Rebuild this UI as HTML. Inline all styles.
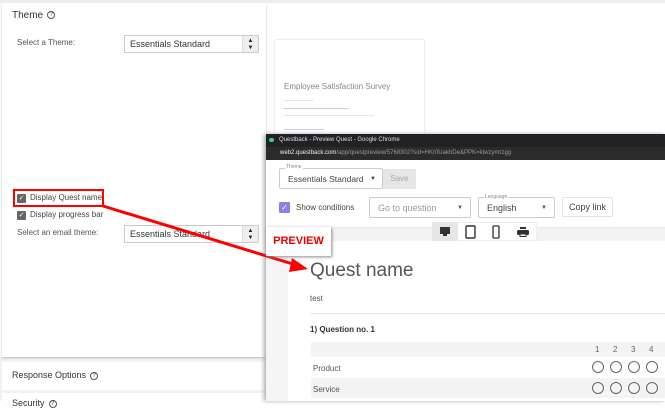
<!DOCTYPE html>
<html><head><style>
*{box-sizing:border-box;margin:0;padding:0}
body{width:665px;height:401px;overflow:hidden;position:relative;background:#fff;font-family:"Liberation Sans",sans-serif;color:#333}
.abs{position:absolute}
.sel{position:absolute;background:#fff;border:1px solid #ccc;font-size:9px;padding-left:5px;line-height:16px;color:#333}
.sel .ar{position:absolute;right:0;top:0;width:16px;height:100%;background:#eee;border-left:1px solid #ddd;font-size:6px;line-height:7px;text-align:center;padding-top:2px;color:#222}
.cb{position:absolute;width:9px;height:9px;background:#666;border-radius:1px;color:#fff;font-size:7px;line-height:9px;text-align:center}
.q{display:inline-block;width:8px;height:8px;border:1px solid #555;border-radius:50%;font-size:6px;line-height:6px;text-align:center;vertical-align:middle;margin-left:4px}
.circ{position:absolute;width:12px;height:12px;border:1px solid #666;border-radius:50%}
.box{position:absolute;background:#fff;border:1px solid #ccc;border-radius:2px;font-size:9px;color:#444}
</style></head><body>
<div class="abs" style="left:0;top:0;width:665px;height:3px;background:#eee"></div>
<div class="abs" style="left:0;top:357px;width:266px;height:44px;background:#f2f2f2"></div>
<div class="abs" style="left:2px;top:3px;width:264px;height:354px;background:#fff;box-shadow:0 1px 2px #bbb"></div>
<div class="abs" style="left:12px;top:10px;font-size:10px;color:#333">Theme<span class="q">?</span></div>
<div class="abs" style="left:17px;top:38px;font-size:8px;color:#555">Select a Theme:</div>
<div class="sel" style="left:124px;top:35px;width:135px;height:18px">Essentials Standard<div class="ar">▲<br>▼</div></div>
<div class="abs" style="left:275px;top:40px;width:149px;height:100px;background:#fff;box-shadow:0 0 2px #ccc"></div>
<div class="abs" style="left:284px;top:82px;font-size:8px;color:#888">Employee Satisfaction Survey</div>
<div class="abs" style="left:284px;top:100px;width:30px;height:1px;background:#e4e4e4"></div>
<div class="abs" style="left:284px;top:108px;width:65px;height:1px;background:#ccc"></div>
<div class="abs" style="left:284px;top:115px;width:90px;height:1px;background:#e4e4e4"></div>
<div class="abs" style="left:284px;top:129px;width:40px;height:1px;background:#ccc"></div>
<div class="cb" style="left:17px;top:194px">✓</div>
<div class="abs" style="left:30px;top:193px;font-size:8px;color:#444">Display Quest name</div>
<div class="cb" style="left:17px;top:211px">✓</div>
<div class="abs" style="left:30px;top:210px;font-size:8px;color:#444">Display progress bar</div>
<div class="abs" style="left:17px;top:228px;font-size:8px;color:#555">Select an email theme:</div>
<div class="sel" style="left:124px;top:225px;width:135px;height:18px">Essentials Standard<div class="ar">▲<br>▼</div></div>
<div class="abs" style="left:2px;top:362px;width:264px;height:28px;background:#fff"></div>
<div class="abs" style="left:12px;top:370px;font-size:9px">Response Options<span class="q">?</span></div>
<div class="abs" style="left:2px;top:393px;width:264px;height:10px;background:#fff"></div>
<div class="abs" style="left:12px;top:398px;font-size:9px">Security<span class="q">?</span></div>
<div class="abs" style="left:266px;top:134px;width:399px;height:267px;background:#fff;box-shadow:-2px 0 4px #aaa"></div>
<div class="abs" style="left:266px;top:134px;width:399px;height:13px;background:#202124;color:#ddd;font-size:6px;line-height:13px;padding-left:13px">Questback - Preview Quest - Google Chrome</div>
<div class="abs" style="left:269px;top:138px;width:5px;height:4px;background:#3c9;border-radius:2px"></div>
<div class="abs" style="left:266px;top:147px;width:399px;height:13px;background:#2b2b2b;color:#999;font-size:6px;line-height:13px;padding-left:14px"><span style="color:#eee">web2.questback.com</span>/app/questpreview/5768302?sid=HKr0UakhDe&amp;PPK=ktwzymrzgg</div>
<div class="box" style="left:279px;top:168px;width:104px;height:21px;line-height:20px;padding-left:8px;font-size:8.5px">Essentials Standard<span style="position:absolute;right:6px;font-size:6px">▼</span></div>
<div class="abs" style="left:285px;top:164px;background:#fff;font-size:5px;color:#888;padding:0 1px">Theme</div>
<div class="abs" style="left:383px;top:169px;width:33px;height:20px;background:#e6e6e6;color:#aaa;font-size:8px;line-height:20px;text-align:center">Save</div>
<div class="abs" style="left:279px;top:202px;width:11px;height:11px;background:#8b80e8;border-radius:1px;color:#fff;font-size:8px;line-height:11px;text-align:center">✓</div>
<div class="abs" style="left:296px;top:203px;font-size:8px;color:#444">Show conditions</div>
<div class="box" style="left:369px;top:197px;width:102px;height:21px;line-height:20px;padding-left:8px;color:#999">Go to question<span style="position:absolute;right:7px;font-size:6px;color:#555">▼</span></div>
<div class="box" style="left:478px;top:197px;width:77px;height:21px;line-height:20px;padding-left:8px">English<span style="position:absolute;right:7px;font-size:6px;color:#555">▼</span></div>
<div class="abs" style="left:484px;top:194px;background:#fff;font-size:5px;color:#888;padding:0 1px">Language</div>
<div class="box" style="left:562px;top:197px;width:51px;height:20px;line-height:19px;text-align:center;border-color:#e3e3e3">Copy link</div>
<div class="abs" style="left:266px;top:227px;width:399px;height:14px;background:#f3f3f3;border-top:1px solid #e8e8e8"></div>
<div class="abs" style="left:432px;top:222px;width:105px;height:19px;background:#fff;border:1px solid #eee"></div>
<div class="abs" style="left:432px;top:222px;width:26px;height:19px;background:#e6e6e6"></div>
<svg class="abs" style="left:432px;top:222px" width="105" height="19">
<rect x="8" y="5" width="10" height="7" fill="#333"/><rect x="11" y="12" width="4" height="2" fill="#333"/>
<rect x="34" y="4" width="9" height="12" rx="1" fill="none" stroke="#333" stroke-width="1.4"/>
<rect x="61" y="4" width="6" height="12" rx="1" fill="none" stroke="#333" stroke-width="1.3"/>
<rect x="85" y="8" width="12" height="5" rx="1.5" fill="#333"/><rect x="88" y="5" width="6" height="2" fill="#333"/><rect x="88" y="12" width="6" height="2.5" fill="#fff" stroke="#333" stroke-width="1"/>
</svg>
<div class="abs" style="left:266px;top:241px;width:22px;height:160px;background:#f5f5f5"></div>
<div class="abs" style="left:310px;top:260px;font-size:19px;color:#555">Quest name</div>
<div class="abs" style="left:310px;top:294px;font-size:8px;color:#555">test</div>
<div class="abs" style="left:310px;top:313px;width:355px;height:1px;background:#e8e8e8"></div>
<div class="abs" style="left:310px;top:325px;font-size:8px;font-weight:bold;color:#333">1) Question no. 1</div>
<div class="abs" style="left:311px;top:342px;width:354px;height:15px;background:#f3f3f3"></div>
<div class="abs" style="left:595px;top:345px;font-size:8px;color:#666">1</div>
<div class="abs" style="left:613px;top:345px;font-size:8px;color:#666">2</div>
<div class="abs" style="left:631px;top:345px;font-size:8px;color:#666">3</div>
<div class="abs" style="left:649px;top:345px;font-size:8px;color:#666">4</div>
<div class="abs" style="left:313px;top:364px;font-size:8px;color:#555">Product</div>
<div class="abs" style="left:311px;top:378px;width:354px;height:20px;background:#f3f3f3"></div>
<div class="abs" style="left:313px;top:385px;font-size:8px;color:#555">Service</div>
<div class="circ" style="left:592px;top:361px"></div><div class="circ" style="left:610px;top:361px"></div><div class="circ" style="left:628px;top:361px"></div><div class="circ" style="left:646px;top:361px"></div>
<div class="circ" style="left:592px;top:382px"></div><div class="circ" style="left:610px;top:382px"></div><div class="circ" style="left:628px;top:382px"></div><div class="circ" style="left:646px;top:382px"></div>
<div class="abs" style="left:13px;top:189px;width:91px;height:18px;border:2.5px solid #f00"></div>
<svg class="abs" style="left:0;top:0" width="665" height="401">
<line x1="103" y1="206" x2="296" y2="265" stroke="#f00" stroke-width="3"/>
<polygon points="308,269 292,258 289,272" fill="#f00"/>
</svg>
<div class="abs" style="left:266px;top:227px;width:65px;height:29px;background:#fff;box-shadow:1px 1px 3px #888;color:#e00;font-weight:bold;font-size:11px;line-height:29px;text-align:center">PREVIEW</div>
</body></html>
